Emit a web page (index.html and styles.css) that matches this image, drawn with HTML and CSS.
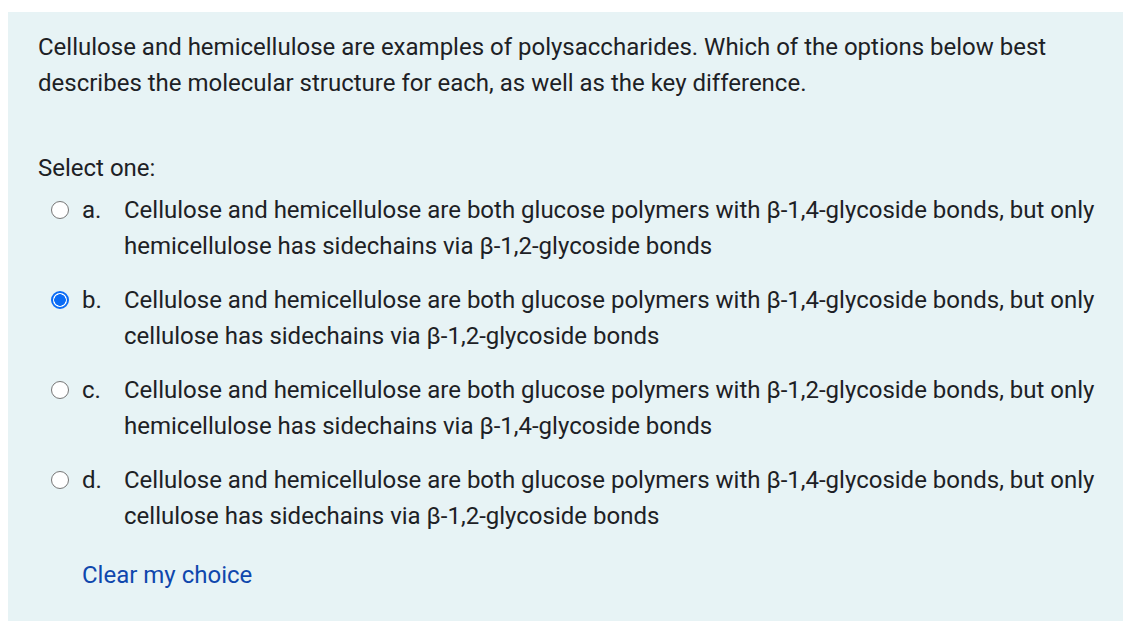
FILE: index.html
```html
<!DOCTYPE html>
<html lang="en">
<head>
<meta charset="utf-8">
<link rel="stylesheet" href="styles.css">
</head>
<body>
<div class="que">
  <div class="qtext">Cellulose and hemicellulose are examples of polysaccharides. Which of the options below best describes the molecular structure for each, as well as the key difference.</div>
  <div class="prompt">Select one:</div>
  <div class="answer">
    <div class="opt">
      <span class="radio"></span>
      <span class="letter">a.</span>
      <span class="otext">Cellulose and hemicellulose are both glucose polymers with β-1,4-glycoside bonds, but only hemicellulose has sidechains via β-1,2-glycoside bonds</span>
    </div>
    <div class="opt">
      <span class="radio checked"></span>
      <span class="letter">b.</span>
      <span class="otext">Cellulose and hemicellulose are both glucose polymers with β-1,4-glycoside bonds, but only cellulose has sidechains via β-1,2-glycoside bonds</span>
    </div>
    <div class="opt">
      <span class="radio"></span>
      <span class="letter">c.</span>
      <span class="otext">Cellulose and hemicellulose are both glucose polymers with β-1,2-glycoside bonds, but only hemicellulose has sidechains via β-1,4-glycoside bonds</span>
    </div>
    <div class="opt">
      <span class="radio"></span>
      <span class="letter">d.</span>
      <span class="otext">Cellulose and hemicellulose are both glucose polymers with β-1,4-glycoside bonds, but only cellulose has sidechains via β-1,2-glycoside bonds</span>
    </div>
  </div>
  <a class="clear" href="#">Clear my choice</a>
</div>
</body>
</html>
```
FILE: styles.css
```css
html, body {
  margin: 0;
  padding: 0;
  background: #ffffff;
}
body {
  padding: 12px 0 0 8px;
  font-family: Roboto, "Noto Sans", sans-serif;
  font-size: 24px;
  line-height: 36px;
  color: #1d2125;
}
.que {
  background: #e7f3f5;
  padding: 17px 10px 28px 30px;
  display: flex;
  flex-direction: column;
  align-items: flex-start;
}
.qtext {
  width: 1060px;
}
.prompt {
  margin-top: 49px;
}
.answer {
  margin-top: 6px;
  display: flex;
  flex-direction: column;
  gap: 18px;
}
.opt {
  display: flex;
  align-items: flex-start;
  padding-left: 13px;
}
.radio {
  flex: none;
  box-sizing: border-box;
  width: 18px;
  height: 18px;
  margin-top: 9px;
  border-radius: 50%;
  border: 1.5px solid #767676;
  background: #fff;
}
.radio.checked {
  border: 2px solid #0b6cf5;
  background: radial-gradient(circle, #0b6cf5 0 5.5px, #fff 6px);
}
.letter {
  flex: none;
  width: 42px;
  margin-left: 13px;
}
.otext {
  flex: 1;
  max-width: 990px;
}
.clear {
  margin-top: 23px;
  margin-left: 44px;
  color: #0f47ad;
  text-decoration: none;
}
```
